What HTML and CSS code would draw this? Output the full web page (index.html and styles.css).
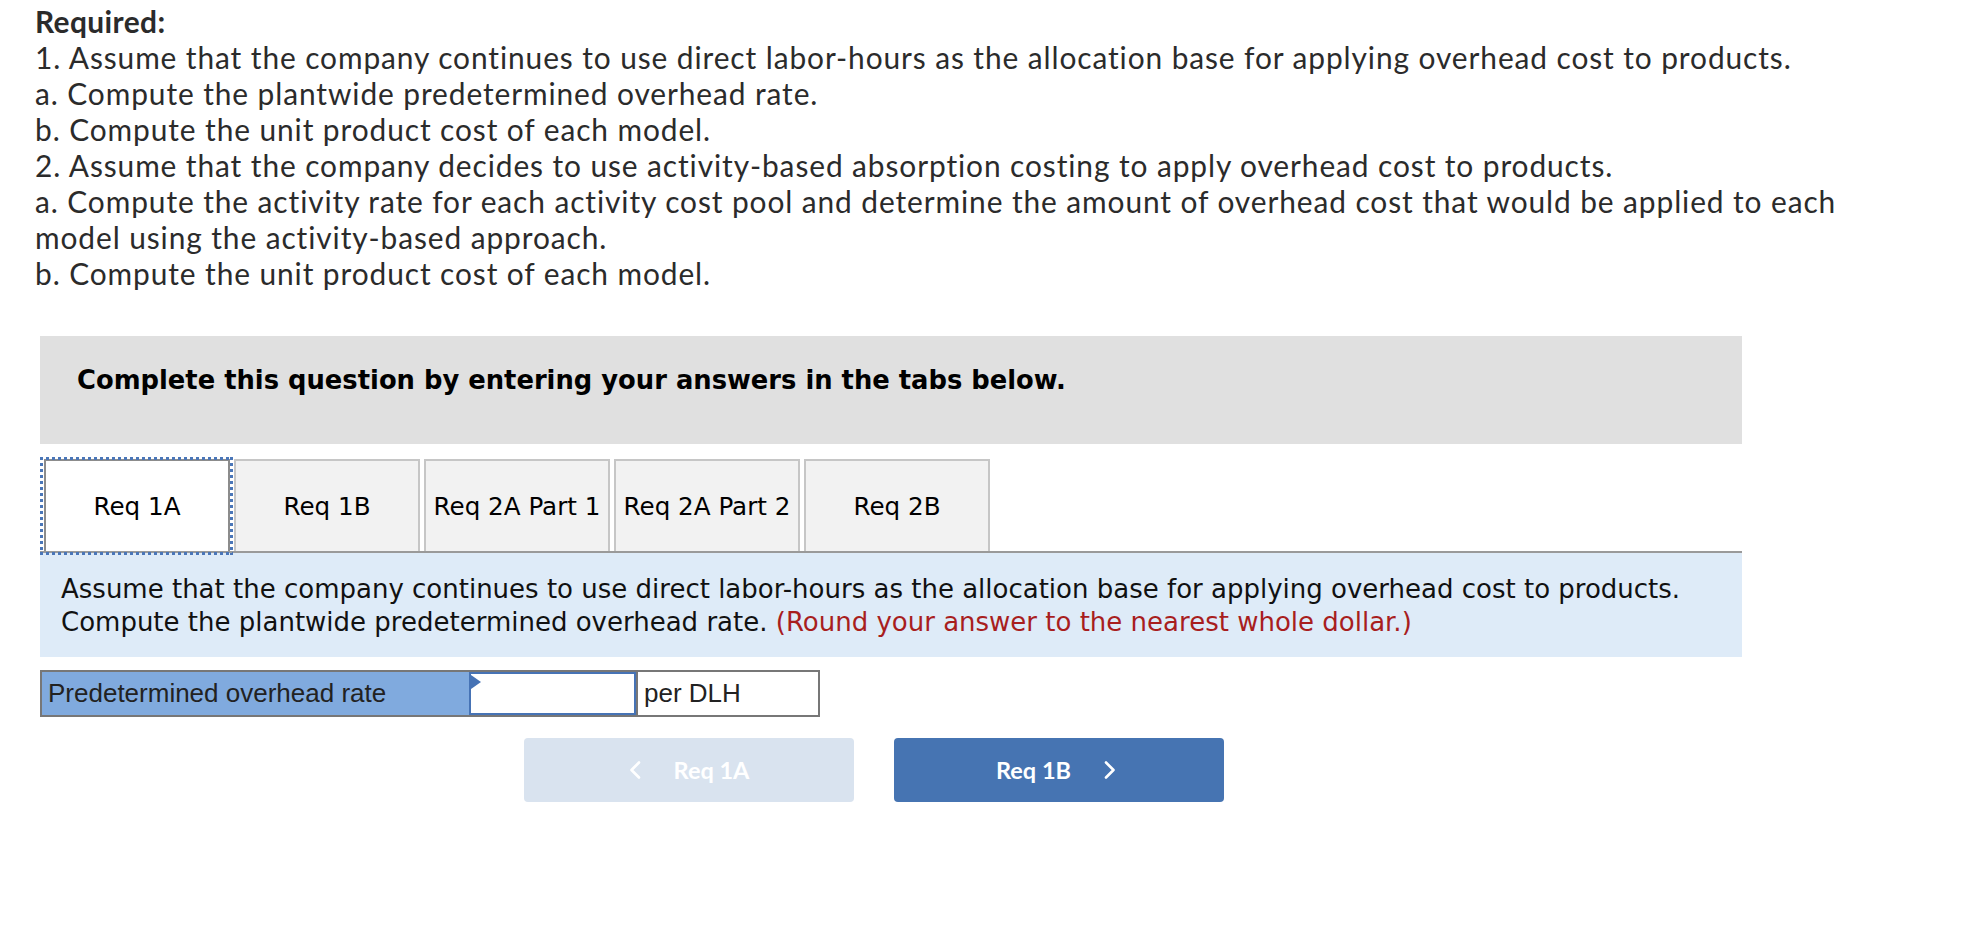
FILE: index.html
```html
<!DOCTYPE html>
<html lang="en">
<head>
<meta charset="utf-8">
<title>Required</title>
<link rel="stylesheet" href="styles.css">
</head>
<body>
<div class="page">
  <div class="required">
    <p class="req-title">Required:</p>
    <p>1. Assume that the company continues to use direct labor-hours as the allocation base for applying overhead cost to products.</p>
    <p>a. Compute the plantwide predetermined overhead rate.</p>
    <p>b. Compute the unit product cost of each model.</p>
    <p>2. Assume that the company decides to use activity-based absorption costing to apply overhead cost to products.</p>
    <p>a. Compute the activity rate for each activity cost pool and determine the amount of overhead cost that would be applied to each model using the activity-based approach.</p>
    <p>b. Compute the unit product cost of each model.</p>
  </div>

  <div class="widget">
    <div class="banner">Complete this question by entering your answers in the tabs below.</div>

    <div class="tabs">
      <div class="tab active">Req 1A</div>
      <div class="tab">Req 1B</div>
      <div class="tab">Req 2A Part 1</div>
      <div class="tab">Req 2A Part 2</div>
      <div class="tab">Req 2B</div>
    </div>

    <div class="instruction">
      Assume that the company continues to use direct labor-hours as the allocation base for applying overhead cost to products.<br>
      Compute the plantwide predetermined overhead rate. <span class="hint">(Round your answer to the nearest whole dollar.)</span>
    </div>

    <div class="answer">
      <div class="answer-label">Predetermined overhead rate</div>
      <div class="answer-input"></div>
      <div class="answer-unit">per DLH</div>
    </div>

    <div class="nav">
      <div class="btn btn-prev">
        <svg class="chev" width="12" height="18" viewBox="0 0 12 18"><polyline points="10,1.5 2.5,9 10,16.5" fill="none" stroke="#fff" stroke-width="2.6" stroke-linecap="round" stroke-linejoin="round"/></svg>
        <span>Req 1A</span>
      </div>
      <div class="btn btn-next">
        <span>Req 1B</span>
        <svg class="chev" width="12" height="18" viewBox="0 0 12 18"><polyline points="2,1.5 9.5,9 2,16.5" fill="none" stroke="#fff" stroke-width="2.6" stroke-linecap="round" stroke-linejoin="round"/></svg>
      </div>
    </div>
  </div>
</div>
</body>
</html>
```

FILE: styles.css
```css
html, body {
  margin: 0;
  padding: 0;
  background: #ffffff;
}

.page {
  padding: 3px 0 0 35px;
}

.required {
  width: 1840px;
}

.required p {
  margin: 0;
  font-family: Lato, "Open Sans", sans-serif;
  font-size: 29.9px;
  line-height: 36px;
  letter-spacing: 0.9px;
  color: #2b2b2b;
}

.required .req-title {
  font-weight: 700;
  letter-spacing: 0.4px;
}

.widget {
  margin: 45px 0 0 5px;
  width: 1702px;
}

.banner {
  height: 108px;
  box-sizing: border-box;
  background: #e0e0e0;
  padding: 28px 0 0 37px;
  font-family: "DejaVu Sans", Verdana, sans-serif;
  font-weight: 700;
  font-size: 25.8px;
  line-height: 32px;
  color: #000;
}

.tabs {
  display: flex;
  gap: 4px;
  margin-top: 15px;
  padding-left: 4px;
  border-bottom: 2px solid #9a9a9a;
}

.tab {
  position: relative;
  width: 186px;
  height: 92px;
  box-sizing: border-box;
  border: 2px solid #c6c6c6;
  border-bottom: none;
  background: #f2f2f2;
  display: flex;
  align-items: center;
  justify-content: center;
  font-family: "DejaVu Sans", Verdana, sans-serif;
  font-size: 24.6px;
  color: #000;
  white-space: nowrap;
}

.tab.active {
  background: #ffffff;
  border-color: #8c8c8c;
}

.tab.active::after {
  content: "";
  position: absolute;
  left: -6px;
  top: -4px;
  right: -5px;
  bottom: -4px;
  background:
    repeating-linear-gradient(90deg, #4a76b8 0 3px, transparent 3px 6px) top left / 100% 3px no-repeat,
    repeating-linear-gradient(90deg, #4a76b8 0 3px, transparent 3px 6px) bottom left / 100% 3px no-repeat,
    repeating-linear-gradient(180deg, #4a76b8 0 3px, transparent 3px 6px) top left / 3px 100% no-repeat,
    repeating-linear-gradient(180deg, #4a76b8 0 3px, transparent 3px 6px) top right / 3px 100% no-repeat;
  pointer-events: none;
}

.instruction {
  height: 104px;
  box-sizing: border-box;
  background: #deebf8;
  padding: 20px 0 0 21px;
  font-family: "DejaVu Sans", Verdana, sans-serif;
  font-size: 26px;
  line-height: 33px;
  color: #111;
  white-space: nowrap;
}

.hint {
  color: #a81e1e;
}

.answer {
  margin-top: 13px;
  display: flex;
  width: 780px;
  height: 47px;
  box-sizing: border-box;
  border: 2px solid #777;
  font-family: "Liberation Sans", Arial, sans-serif;
  font-size: 26px;
  color: #222;
}

.answer-label {
  width: 427px;
  background: #80aade;
  padding-left: 6px;
  box-sizing: border-box;
  display: flex;
  align-items: center;
}

.answer-input {
  position: relative;
  width: 167px;
  box-sizing: border-box;
  border: 2px solid #4673b5;
  background: #fff;
}

.answer-input::before {
  content: "";
  position: absolute;
  left: 0;
  top: 1px;
  border-left: 10px solid #4673b5;
  border-top: 7px solid transparent;
  border-bottom: 7px solid transparent;
}

.answer-unit {
  flex: 1;
  border-left: 2px solid #777;
  padding-left: 6px;
  display: flex;
  align-items: center;
  background: #fff;
}

.nav {
  display: flex;
  gap: 40px;
  margin: 21px 0 0 484px;
}

.btn {
  width: 330px;
  height: 64px;
  border-radius: 4px;
  display: flex;
  align-items: center;
  justify-content: center;
  gap: 33px;
  font-family: Lato, "Open Sans", sans-serif;
  font-weight: 700;
  font-size: 23.5px;
  color: #fff;
}

.btn-prev {
  background: #d9e3ef;
}

.btn-next {
  background: #4674b2;
}

.btn-next span {
  margin-left: -6px;
}

.chev {
  display: block;
}
```
